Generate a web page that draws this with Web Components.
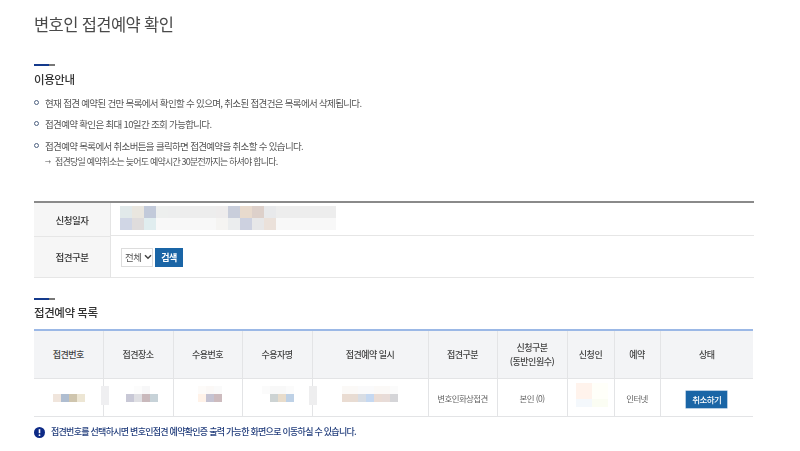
<!DOCTYPE html>
<html lang="ko"><head><meta charset="utf-8"><title>변호인 접견예약 확인</title>
<style>
html,body{margin:0;padding:0;background:#fff;overflow:hidden}
body{font-family:"Noto Sans CJK KR","Noto Sans",sans-serif;color:#444;width:800px;height:451px}
</style></head><body>
<visit-page>
  <page-title>변호인 접견예약 확인</page-title>
  <section-head style="--top:28px;--gap:5px">이용안내</section-head>
  <info-list></info-list>
  <search-form></search-form>
  <section-head style="--top:20px;--gap:4px">접견예약 목록</section-head>
  <visit-table></visit-table>
  <note-line>접견번호를 선택하시면 변호인접견 예약확인증 출력 가능한 화면으로 이동하실 수 있습니다.</note-line>
</visit-page>
<script>
function def(name,css,html,setup){
  customElements.define(name,class extends HTMLElement{
    constructor(){super();const r=this.attachShadow({mode:'open'});
      r.innerHTML='<style>'+css+'</style>'+html;
      if(setup)setup(r,this);}
  });
}
def('visit-page',':host{display:block;padding:0 46px 0 34px;box-sizing:border-box;width:800px;height:451px;overflow:hidden;letter-spacing:-.45px;filter:blur(.3px)}','<slot></slot>');
def('page-title',':host{display:block;font-size:16.5px;line-height:24px;padding-top:12px;color:#4a4a4a;letter-spacing:-.6px}','<slot></slot>');
def('section-head',':host{display:block;margin-top:var(--top);font-size:11.5px;line-height:16px;color:#333;font-weight:500}:host::before{content:"";display:block;width:21px;height:2px;background:linear-gradient(90deg,#143a8c 70%,#777 70%);margin-bottom:var(--gap)}','<slot></slot>');
def('mosaic-patch',':host{display:inline-grid;grid-auto-rows:var(--h,8px);grid-template-columns:repeat(var(--n),var(--w,8px));vertical-align:top}i{display:block}','',(r,h)=>{
  const rows=h.getAttribute('data-c').split('|');
  h.style.setProperty('--n',rows[0].split(',').length);
  for(const row of rows)for(const c of row.split(',')){const i=document.createElement('i');i.style.background=c==='-'?'transparent':'#'+c;r.appendChild(i);}
});
def('info-list',`:host{display:block;margin-top:8.5px;font-size:9.5px;color:#555;letter-spacing:-.67px}
ul{list-style:none;margin:0;padding:0}
li{position:relative;padding-left:11px;line-height:14px;margin-bottom:7.5px}
li::before{content:"";position:absolute;left:0;top:4px;width:3px;height:3px;border:1.2px solid #4d6080;border-radius:50%}
p{margin:2px 0 0;font-size:9px;line-height:14px;color:#555;letter-spacing:-.8px;display:flex;align-items:center;gap:4px}
b{font-size:6px;font-weight:400;letter-spacing:0}`,
`<ul><li>현재 접견 예약된 건만 목록에서 확인할 수 있으며, 취소된 접견건은 목록에서 삭제됩니다.</li>
<li>접견예약 확인은 최대 10일간 조회 가능합니다.</li>
<li>접견예약 목록에서 취소버튼을 클릭하면 접견예약을 취소할 수 있습니다.<p><b>→</b><span>접견당일 예약취소는 늦어도 예약시간 30분전까지는 하셔야 합니다.</span></p></li></ul>`);
def('search-form',`:host{display:grid;grid-template-columns:77px 1fr;margin-top:32.5px;border-top:2px solid #8a8a8a;font-size:9.5px}
.h{background:#f6f6f6;border-right:1px solid #e4e4e4;display:flex;align-items:center;justify-content:center;font-weight:500;color:#333;border-bottom:1px solid #e6e6e6}
.d{display:flex;align-items:center;padding-left:9px;gap:2px;border-bottom:1px solid #e6e6e6}
.r1{height:33px}.r2{height:40px}
.r1.d{align-items:flex-start;padding-top:3px;box-sizing:border-box}
.sel{width:32px;height:19px;box-sizing:border-box;border:1px solid #ddd;display:flex;align-items:center;gap:2px;padding-left:3px;color:#555;font-size:9.5px}
.btn{width:28px;height:19px;background:#1a65a6;color:#fff;display:flex;align-items:center;justify-content:center;font-size:9px;font-weight:700}`,
`<div class="h r1">신청일자</div><div class="d r1"><mosaic-patch style="--w:12px;--h:12px" data-c="e1e9ea,e9e6df,c2cada,edefee,edeeee,ededed,ededed,ededed,eeecec,c9cedb,e8dacd,ddd0ca,e8e9eb,ededed,ededed,ededed,ededed,ededed|d0d6e5,dfdcdc,e0edef,f8f8f8,f8f8f8,f8f8f8,f8f8f8,f8f8f8,f5f4f2,ebedee,cdd1e0,e7e7e8,ebe1da,f8f8f8,f8f8f8,f8f8f8,f8f8f8,f8f8f8"></mosaic-patch></div>
<div class="h r2">접견구분</div><div class="d r2" style="padding-left:10px"><div class="sel">전체<svg width="8" height="6" viewBox="0 0 8 6"><path d="M1 1.2 4 4.2 7 1.2" fill="none" stroke="#444" stroke-width="1.5"/></svg></div><div class="btn">검색</div></div>`);
def('visit-table',`:host{display:block;margin-top:9px;width:719px;font-size:9px;color:#444;letter-spacing:-.5px}
table{border-collapse:collapse;table-layout:fixed;width:719px;border-top:2px solid #9bb8e6}
th,td{border:1px solid #e3e4e6;text-align:center;padding:0;position:relative}
th:first-child,td:first-child{border-left:0}th:last-child,td:last-child{border-right:0}
tr>*{border-top:0}
th{height:47px;background:#f3f4f6;font-weight:500;line-height:13.5px;color:#444}
td{height:37px;font-size:8.5px;color:#666;letter-spacing:-.6px}
mosaic-patch{position:absolute}
.btn{display:inline-block;width:41px;height:17px;line-height:17px;background:#1a65a6;color:#fff;font-size:8.5px;font-weight:500;position:relative;top:2px;box-shadow:0 0 0 .5px #6f9bc7}`,
`<table><colgroup><col style="width:69px"><col style="width:70px"><col style="width:69px"><col style="width:70px"><col style="width:116px"><col style="width:69px"><col style="width:70px"><col style="width:47px"><col style="width:46px"><col></colgroup>
<tr><th>접견번호</th><th>접견장소</th><th>수용번호</th><th>수용자명</th><th>접견예약 일시</th><th>접견구분</th><th>신청구분<br>(동반인원수)</th><th>신청인</th><th>예약</th><th>상태</th></tr>
<tr><td><mosaic-patch style="left:19px;top:15px" data-c="f0e5dc,afbdd0,cfc5ae,ede6d4"></mosaic-patch><mosaic-patch style="left:67px;top:7px;--h:19px" data-c="efeff1"></mosaic-patch></td>
<td><mosaic-patch style="left:22px;top:7px" data-c="-,fcfcfc,f7f7f8,-|c8c8d6,dfdfe3,c9b9bc,c7d2d8"></mosaic-patch></td>
<td><mosaic-patch style="left:24px;top:7px" data-c="fdfbf9,fbf8f6,fafafa|fff2e8,c5c3d2,cdbbbe"></mosaic-patch></td>
<td><mosaic-patch style="left:19px;top:7px" data-c="fbfbfb,f8f8f8,f8f8f8,fbfbfb|-,cdd3d3,e8dccb,bed1e6"></mosaic-patch><mosaic-patch style="left:66px;top:7px;--h:19px" data-c="eeeeef"></mosaic-patch></td>
<td><mosaic-patch style="left:29px;top:7px" data-c="fbf9f7,fbf9f7,fafafb,fafafb,fbf9f7,fbf9f7,fbfbfb|eadcd2,e8dcd3,d8dde4,c5d8f1,eadcd5,e8dcd8,d5d5d8"></mosaic-patch></td>
<td>변호인화상접견</td><td>본인 (0)</td>
<td><mosaic-patch style="left:8px;top:4px;--w:16px;--h:16px" data-c="fff3ec,fffff9"></mosaic-patch><mosaic-patch style="left:8px;top:20px;--w:16px;--h:8px" data-c="f4f8fc,fbfdf3"></mosaic-patch></td>
<td>인터넷</td><td><span class="btn">취소하기</span></td></tr></table>`);
def('note-line',`:host{display:flex;align-items:center;gap:6px;margin-top:8px;font-size:9px;line-height:14px;color:#25407e;font-weight:500;letter-spacing:-.73px}
svg{flex:none}`,
`<svg width="11" height="11" viewBox="0 0 11 11"><circle cx="5.5" cy="5.5" r="5.5" fill="#0d2a86"/><path d="M5.5 2.2v4" stroke="#fff" stroke-width="1.6"/><circle cx="5.5" cy="8.2" r=".9" fill="#fff"/></svg><span><slot></slot></span>`);
</script>
</body></html>
